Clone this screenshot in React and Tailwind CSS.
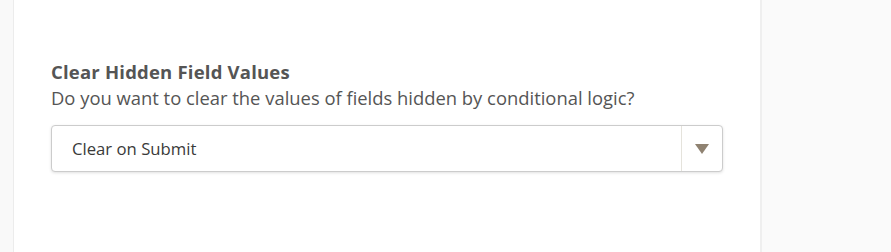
export default function App() {
  return (
    <div className="flex h-[252px] w-[891px] bg-[#fafafa] font-['Open_Sans',sans-serif]">
      <div className="w-[14px] border-r border-[#ececec] bg-[#f9f9f9]" />
      <div className="w-[748px] border-r-2 border-[#efefef] bg-white pl-[37px] pr-[37px] pt-[59px]">
        <h3 className="text-[18.5px] font-bold leading-[26px] tracking-[0.2px] text-[#555]">Clear Hidden Field Values</h3>
        <p className="text-[18.4px] leading-[26px] text-[#555]">
          Do you want to clear the values of fields hidden by conditional logic?
        </p>
        <div className="mt-[14px] flex h-[47px] items-stretch rounded-[4px] border border-[#ccc] bg-white shadow-[0_1px_3px_rgba(0,0,0,0.12)]">
          <div className="flex flex-1 items-center pl-[20px] text-[16.7px] text-[#3a3a3a]">Clear on Submit</div>
          <div className="flex w-[41px] items-center justify-center border-l border-[#e5e3dc]">
            <svg width="14" height="10" viewBox="0 0 14 10">
              <path d="M0 0 L14 0 L7 10 Z" fill="#8f8271" />
            </svg>
          </div>
        </div>
      </div>
    </div>
  );
}
